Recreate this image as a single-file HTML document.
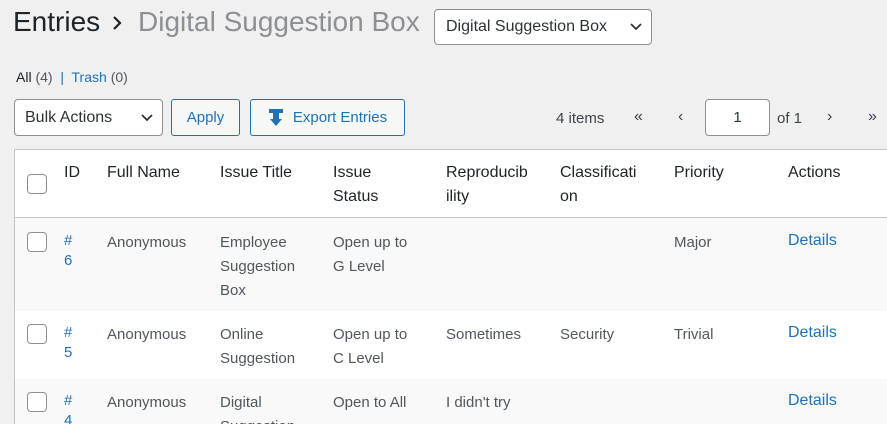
<!DOCTYPE html>
<html style="overflow:hidden;height:424px"><head><style>
body{margin:0;width:887px;height:424px;overflow:hidden;background:#f0f0f1;font-family:"Liberation Sans",sans-serif;color:#3c434a;position:relative}
.a{position:absolute;white-space:nowrap}
.btn{position:absolute;border:1px solid #2271b1;border-radius:3px;color:#2271b1;background:#f6f7f7;font-size:15px;box-sizing:border-box;display:flex;align-items:center;justify-content:center}
.sel{position:absolute;border:1px solid #8c8f94;border-radius:4px;background:#fff;color:#2c3338;box-sizing:border-box;font-size:15px;display:flex;align-items:center}
.sel svg{position:absolute;right:9px;top:50%;margin-top:-4px}
.cb{position:absolute;width:18px;height:18px;border:1px solid #8c8f94;border-radius:4px;background:#fff}
.row{position:absolute;left:14px;width:873px}
.c{position:absolute;font-size:15px;line-height:24px;color:#50575e;white-space:nowrap}
.lk{color:#2271b1}
</style></head><body>
<div class="a" style="left:13px;top:6px;font-size:28px;color:#1d2327">Entries</div>
<svg class="a" style="left:112px;top:15px" width="10" height="16" viewBox="0 0 10 16"><path d="M2 2l6 6-6 6" stroke="#1d2327" stroke-width="2.2" fill="none"/></svg>
<div class="a" style="left:138px;top:6px;font-size:28px;color:#8c8f94">Digital Suggestion Box</div>
<div class="sel" style="left:434px;top:9px;width:218px;height:36px;padding-left:11px;font-size:16px">Digital Suggestion Box<svg width="12" height="8" viewBox="0 0 12 8"><path d="M1 1l5 5 5-5" stroke="#2c3338" stroke-width="1.8" fill="none"/></svg></div>
<div class="a" style="left:16px;top:69px;font-size:14px;color:#1d2327">All <span style="color:#50575e">(4)</span> <span style="color:#2271b1">&nbsp;|&nbsp; Trash</span> <span style="color:#50575e">(0)</span></div>
<div class="sel" style="left:14px;top:99px;width:149px;height:37px;padding-left:10px;font-size:16px">Bulk Actions<svg width="12" height="8" viewBox="0 0 12 8"><path d="M1 1l5 5 5-5" stroke="#2c3338" stroke-width="1.8" fill="none"/></svg></div>
<div class="btn" style="left:171px;top:99px;width:69px;height:37px">Apply</div>
<div class="btn" style="left:250px;top:99px;width:155px;height:37px"><svg width="16" height="20" viewBox="0 0 16 20" style="margin-right:9px"><rect x="1" y="1" width="14" height="4" fill="#2271b1"/><path d="M5 5v6H2l6 7 6-7h-3V5z" fill="#2271b1"/></svg>Export Entries</div>
<div class="a" style="left:556px;top:110px;font-size:15px">4 items</div>
<div class="a" style="left:634px;top:108px;font-size:16px">«</div>
<div class="a" style="left:678px;top:108px;font-size:16px">‹</div>
<div class="sel" style="left:705px;top:99px;width:65px;height:37px;justify-content:center">1</div>
<div class="a" style="left:777px;top:110px;font-size:15px">of 1</div>
<div class="a" style="left:827px;top:108px;font-size:16px">›</div>
<div class="a" style="left:868px;top:108px;font-size:16px">»</div>

<div class="row" style="top:149px;height:69px;background:#fff;border-top:1px solid #c3c4c7;border-left:1px solid #c3c4c7;border-bottom:1px solid #c3c4c7;box-sizing:border-box"></div>
<div class="row" style="top:218px;height:93px;background:#f9f9f9;border-left:1px solid #c3c4c7"></div>
<div class="row" style="top:311px;height:68px;background:#fff;border-left:1px solid #c3c4c7"></div>
<div class="row" style="top:379px;height:45px;background:#f9f9f9;border-left:1px solid #c3c4c7;overflow:hidden"></div>

<div class="cb" style="left:27px;top:174px"></div>
<div class="c" style="left:64px;top:161px;color:#1d2327;font-size:16px">ID</div>
<div class="c" style="left:107px;top:161px;color:#1d2327;font-size:16px">Full Name</div>
<div class="c" style="left:220px;top:161px;color:#1d2327;font-size:16px">Issue Title</div>
<div class="c" style="left:333px;top:161px;color:#1d2327;font-size:16px">Issue<br>Status</div>
<div class="c" style="left:446px;top:161px;color:#1d2327;font-size:16px">Reproducib<br>ility</div>
<div class="c" style="left:560px;top:161px;color:#1d2327;font-size:16px">Classificati<br>on</div>
<div class="c" style="left:674px;top:161px;color:#1d2327;font-size:16px">Priority</div>
<div class="c" style="left:788px;top:161px;color:#1d2327;font-size:16px">Actions</div>

<div class="cb" style="left:27px;top:232px"></div>
<div class="c lk" style="left:64px;top:231px;line-height:20px">#<br>6</div>
<div class="c" style="left:107px;top:231px">Anonymous</div>
<div class="c" style="left:220px;top:231px">Employee<br>Suggestion<br>Box</div>
<div class="c" style="left:333px;top:231px">Open up to<br>G Level</div>
<div class="c" style="left:674px;top:231px">Major</div>
<div class="c lk" style="left:788px;top:229px;font-size:16px">Details</div>

<div class="cb" style="left:27px;top:324px"></div>
<div class="c lk" style="left:64px;top:323px;line-height:20px">#<br>5</div>
<div class="c" style="left:107px;top:323px">Anonymous</div>
<div class="c" style="left:220px;top:323px">Online<br>Suggestion</div>
<div class="c" style="left:333px;top:323px">Open up to<br>C Level</div>
<div class="c" style="left:446px;top:323px">Sometimes</div>
<div class="c" style="left:560px;top:323px">Security</div>
<div class="c" style="left:674px;top:323px">Trivial</div>
<div class="c lk" style="left:788px;top:321px;font-size:16px">Details</div>

<div class="cb" style="left:27px;top:392px"></div>
<div class="c lk" style="left:64px;top:391px;line-height:20px">#<br>4</div>
<div class="c" style="left:107px;top:391px">Anonymous</div>
<div class="c" style="left:220px;top:391px">Digital<br>Suggestion</div>
<div class="c" style="left:333px;top:391px">Open to All</div>
<div class="c" style="left:446px;top:391px">I didn't try</div>
<div class="c lk" style="left:788px;top:389px;font-size:16px">Details</div>
</body></html>
